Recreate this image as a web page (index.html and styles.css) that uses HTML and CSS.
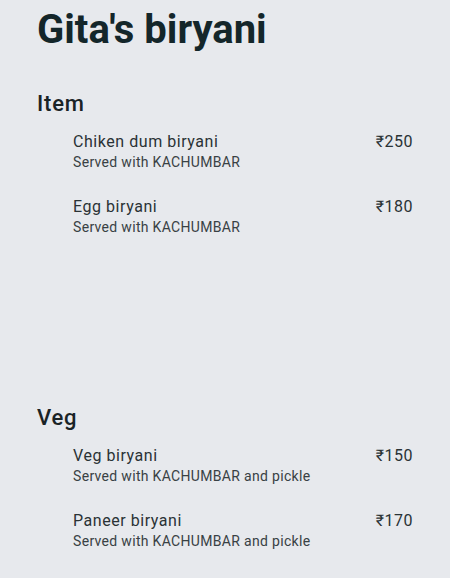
FILE: index.html
```html
<!DOCTYPE html>
<html lang="en">
<head>
  <meta charset="UTF-8" />
  <meta name="viewport" content="width=device-width, initial-scale=1.0"/>
  <title>Gita's biryani</title>
  <link rel="stylesheet" href="styles.css">
</head>
<body>

  <h1>Gita's biryani</h1>

  <section class="menu-section">
    <h2>Item</h2>
    <div class="menu-list">
      <div class="menu-item">
        <div class="item-info">
          <div class="item-name">Chiken dum biryani</div>
          <div class="item-desc">Served with KACHUMBAR</div>
        </div>
        <div class="item-price">₹250</div>
      </div>
      <div class="menu-item">
        <div class="item-info">
          <div class="item-name">Egg biryani</div>
          <div class="item-desc">Served with KACHUMBAR</div>
        </div>
        <div class="item-price">₹180</div>
      </div>
    </div>
  </section>

  <section class="menu-section">
    <h2>Veg</h2>
    <div class="menu-list">
      <div class="menu-item">
        <div class="item-info">
          <div class="item-name">Veg biryani</div>
          <div class="item-desc">Served with KACHUMBAR and pickle</div>
        </div>
        <div class="item-price">₹150</div>
      </div>
      <div class="menu-item">
        <div class="item-info">
          <div class="item-name">Paneer biryani</div>
          <div class="item-desc">Served with KACHUMBAR and pickle</div>
        </div>
        <div class="item-price">₹170</div>
      </div>
    </div>
  </section>

</body>
</html>
```

FILE: styles.css
```css
body {
  font-family: Roboto, "Noto Sans", sans-serif;
  background: #e7e9ed;
  color: #1b2a2c;
  margin: 0;
  padding: 0 37px;
}

h1 {
  font-size: 40px;
  font-weight: 700;
  margin: 0;
  padding-top: 6px;
  line-height: 48px;
  color: #14262a;
}

.menu-section {
  box-sizing: border-box;
  padding-top: 36px;
}

.menu-section:first-of-type {
  min-height: 314px;
}

h2 {
  font-size: 22px;
  font-weight: 500;
  letter-spacing: 0.8px;
  margin: 0 0 13px;
  line-height: 28px;
  color: #1a2326;
}

.menu-list {
  display: flex;
  flex-direction: column;
  gap: 24px;
}

.menu-item {
  display: flex;
  justify-content: space-between;
  align-items: flex-start;
  padding-left: 36px;
}

.item-name {
  font-size: 16px;
  line-height: 21px;
  letter-spacing: 0.55px;
  color: #2a3235;
}

.item-desc {
  font-size: 14px;
  line-height: 20px;
  letter-spacing: 0.32px;
  color: #394144;
}

.item-price {
  font-size: 16px;
  line-height: 21px;
  letter-spacing: 0.5px;
  color: #2a3235;
}
```
